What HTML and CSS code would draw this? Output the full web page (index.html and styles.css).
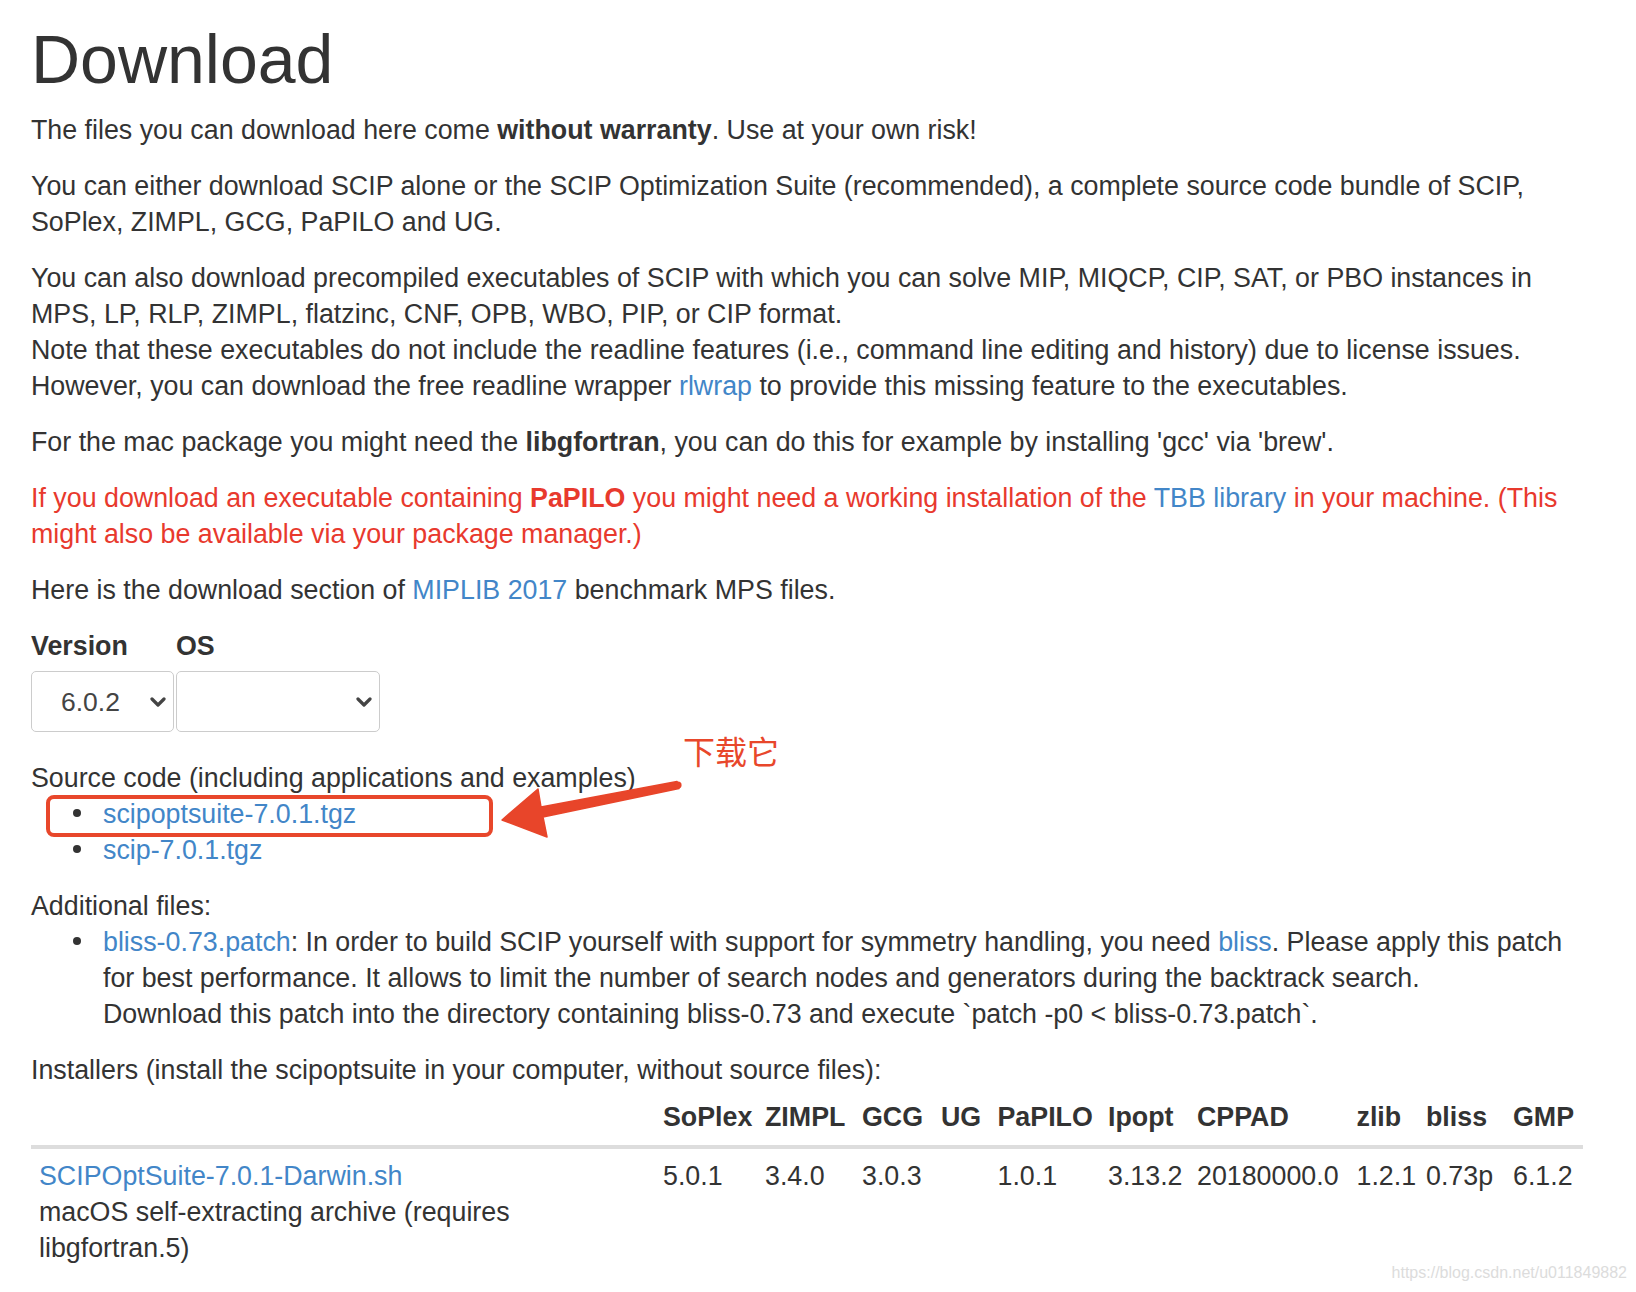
FILE: index.html
```html
<html>
<head>
    <title>Download</title>
    <link rel="stylesheet" href="styles.css">
</head>
<body>
    <div class="container">
        <h1>Download</h1>
        <p>The files you can download here come <b>without warranty</b>. Use at your own risk!</p>
        <p>You can either download SCIP alone or the SCIP Optimization Suite (recommended), a complete source code bundle of SCIP, SoPlex, ZIMPL, GCG, PaPILO and UG.</p>
        <p>You can also download precompiled executables of SCIP with which you can solve MIP, MIQCP, CIP, SAT, or PBO instances in MPS, LP, RLP, ZIMPL, flatzinc, CNF, OPB, WBO, PIP, or CIP format.<br>
        Note that these executables do not include the readline features (i.e., command line editing and history) due to license issues.<br>
        However, you can download the free readline wrapper <a href="#">rlwrap</a> to provide this missing feature to the executables.</p>
        <p>For the mac package you might need the <b>libgfortran</b>, you can do this for example by installing 'gcc' via 'brew'.</p>
        <p class="warning">If you download an executable containing <b>PaPILO</b> you might need a working installation of the <a href="#">TBB library</a> in your machine. (This might also be available via your package manager.)</p>
        <p>Here is the download section of <a href="#">MIPLIB 2017</a> benchmark MPS files.</p>

        <form class="picker">
            <div class="form-group version">
                <label for="version">Version</label>
                <div class="select">
                    <select id="version" name="version">
                        <option value="6.0.2">6.0.2</option>
                    </select>
                    <svg width="16" height="10" viewBox="0 0 16 10"><polyline points="2,2 8,8 14,2" fill="none" stroke="#444" stroke-width="3.2" stroke-linecap="round" stroke-linejoin="round"/></svg>
                </div>
            </div>
            <div class="form-group os">
                <label for="os">OS</label>
                <div class="select">
                    <select id="os" name="os"></select>
                    <svg width="16" height="10" viewBox="0 0 16 10"><polyline points="2,2 8,8 14,2" fill="none" stroke="#444" stroke-width="3.2" stroke-linecap="round" stroke-linejoin="round"/></svg>
                </div>
            </div>
        </form>

        <div class="files">
            Source code (including applications and examples)
            <ul>
                <li><a href="#">scipoptsuite-7.0.1.tgz</a></li>
                <li><a href="#">scip-7.0.1.tgz</a></li>
            </ul>
            <!-- annotation drawn on the screenshot -->
            <div class="mark-box"></div>
            <svg class="mark-arrow" width="220" height="110" viewBox="0 0 220 110">
                <polygon points="22,85 58,54 61,72 197,46.5 199,53.5 63,82 67,102" fill="#e8452a" stroke="#e8452a" stroke-width="1.5" stroke-linejoin="round"/>
                <circle cx="198" cy="50" r="3.6" fill="#e8452a"/>
            </svg>
            <span class="mark-text">下载它</span>
        </div>

        <div class="files">
            Additional files:
            <ul>
                <li><a href="#">bliss-0.73.patch</a>: In order to build SCIP yourself with support for symmetry handling, you need <a href="#">bliss</a>. Please apply this patch for best performance. It allows to limit the number of search nodes and generators during the backtrack search.<br>
                Download this patch into the directory containing bliss-0.73 and execute `patch -p0 &lt; bliss-0.73.patch`.</li>
            </ul>
        </div>

        <div class="installers">Installers (install the scipoptsuite in your computer, without source files):</div>
        <table>
            <colgroup>
                <col style="width: 624px">
                <col style="width: 102px">
                <col style="width: 97px">
                <col style="width: 79px">
                <col style="width: 56.5px">
                <col style="width: 110.5px">
                <col style="width: 89px">
                <col style="width: 159.5px">
                <col style="width: 69.5px">
                <col style="width: 87px">
                <col style="width: 78px">
            </colgroup>
            <thead>
                <tr>
                    <th></th>
                    <th>SoPlex</th>
                    <th>ZIMPL</th>
                    <th>GCG</th>
                    <th>UG</th>
                    <th>PaPILO</th>
                    <th>Ipopt</th>
                    <th>CPPAD</th>
                    <th>zlib</th>
                    <th>bliss</th>
                    <th>GMP</th>
                </tr>
            </thead>
            <tbody>
                <tr>
                    <td><a href="#">SCIPOptSuite-7.0.1-Darwin.sh</a><br>macOS self-extracting archive (requires libgfortran.5)</td>
                    <td>5.0.1</td>
                    <td>3.4.0</td>
                    <td>3.0.3</td>
                    <td></td>
                    <td>1.0.1</td>
                    <td>3.13.2</td>
                    <td>20180000.0</td>
                    <td>1.2.1</td>
                    <td>0.73p</td>
                    <td>6.1.2</td>
                </tr>
            </tbody>
        </table>
    </div>
    <div class="watermark">https://blog.csdn.net/u011849882</div>
</body>
</html>
```
FILE: styles.css
```css
body {
    margin: 0;
    padding: 22px 0 0 31px;
    font-family: "Liberation Sans", Arial, sans-serif;
    font-size: 26.8px;
    line-height: 36px;
    color: #333;
    background: #fff;
    position: relative;
    min-height: 1270px;
}
.container {
    width: 1555px;
}
h1 {
    font-size: 68px;
    line-height: 74px;
    font-weight: normal;
    margin: 0 0 16px;
    color: #333;
}
p {
    margin: 0 0 20px;
}
a {
    color: #4286c8;
    text-decoration: none;
}
b, th, label {
    font-weight: bold;
}
.warning {
    color: #e8392d;
}
.picker {
    display: flex;
    gap: 2px;
    margin: 0 0 28px;
}
.form-group label {
    display: block;
    margin-bottom: 7px;
}
.version { width: 143px; }
.os { width: 204px; }
.select {
    display: flex;
    align-items: center;
    height: 61px;
    box-sizing: border-box;
    border: 1px solid #ccc;
    border-radius: 5px;
    background: #fff;
    padding-right: 7px;
}
.select select {
    flex: 1;
    min-width: 0;
    appearance: none;
    -webkit-appearance: none;
    border: none;
    background: transparent;
    font-family: inherit;
    font-size: 26.5px;
    color: #444;
    padding: 0 0 0 29px;
    outline: none;
}
.files {
    position: relative;
}
.files ul {
    margin: 0 0 20px;
    padding-left: 72px;
    list-style: none;
}
.files li::before {
    content: "";
    display: inline-block;
    width: 8px;
    height: 8px;
    border-radius: 50%;
    background: #333;
    margin: 0 22px 0 -30px;
    vertical-align: 6px;
}
.mark-box {
    position: absolute;
    left: 15px;
    top: 35px;
    width: 447px;
    height: 42px;
    box-sizing: border-box;
    border: 4px solid #e8472b;
    border-radius: 8px;
}
.mark-arrow {
    position: absolute;
    left: 449px;
    top: -25px;
}
.mark-text {
    position: absolute;
    left: 652px;
    top: -26px;
    font-family: "Noto Sans CJK SC", sans-serif;
    font-size: 32px;
    line-height: 32px;
    color: #e8472b;
}
.installers {
    margin-bottom: 2px;
}
table {
    width: 1552px;
    table-layout: fixed;
    border-collapse: collapse;
    font-size: inherit;
    line-height: inherit;
    color: inherit;
}
th, td {
    text-align: left;
    vertical-align: top;
    padding: 9px 8px 8px;
}
th {
    padding-bottom: 10px;
    border-bottom: 4px solid #ddd;
    white-space: nowrap;
}
td {
    padding-top: 9px;
}
.watermark {
    position: absolute;
    right: 9px;
    top: 1263px;
    font-size: 16px;
    line-height: 20px;
    color: #dcdcdc;
}
```
